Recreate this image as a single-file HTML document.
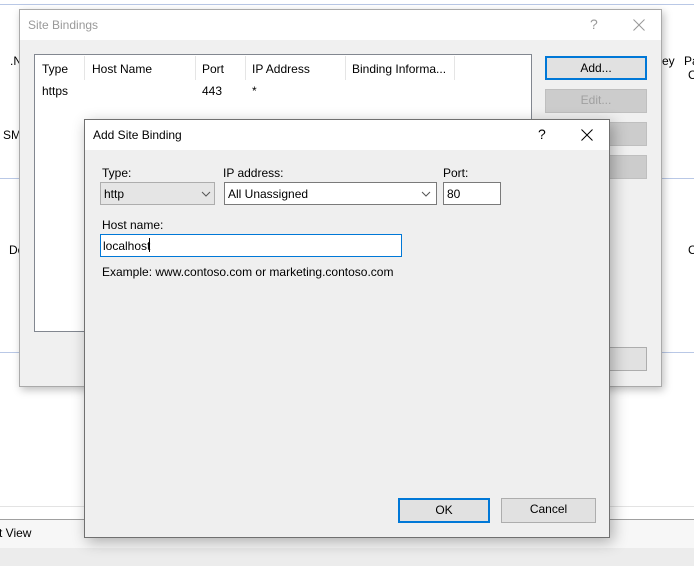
<!DOCTYPE html>
<html><head><style>
*{box-sizing:border-box;margin:0;padding:0}
body{width:694px;height:566px;position:relative;background:#fff;font-family:"Liberation Sans",sans-serif;font-size:12px;color:#000;overflow:hidden}
.a{position:absolute}
.t{position:absolute;white-space:nowrap}
.btn{position:absolute;background:#e1e1e1;border:1px solid #adadad;text-align:center;line-height:21px}
.dis{color:#a0a0a0;background:#cccccc;border-color:#bfbfbf}
</style></head><body>
<div class="a" style="left:0;top:4px;width:694px;height:1px;background:#b9c8e6"></div>
<div class="a" style="left:0;top:178px;width:694px;height:1px;background:#b9c8e6"></div>
<div class="a" style="left:0;top:352px;width:694px;height:1px;background:#b9c8e6"></div>
<div class="t" style="left:10px;top:54px">.N</div>
<div class="t" style="left:3px;top:128px">SM</div>
<div class="t" style="left:9px;top:243px">Do</div>
<div class="t" style="left:662px;top:54px">ey</div>
<div class="t" style="left:684px;top:54px">Pa</div>
<div class="t" style="left:688px;top:68px">C</div>
<div class="t" style="left:688px;top:243px">C</div>
<div class="a" style="left:0;top:506px;width:694px;height:1px;background:#e3e3e3"></div>
<div class="a" style="left:0;top:519px;width:694px;height:1px;background:#a0a0a0"></div>
<div class="a" style="left:0;top:520px;width:694px;height:28px;background:#f7f7f7"></div>
<div class="a" style="left:0;top:548px;width:694px;height:18px;background:#ececec"></div>
<div class="t" style="left:-1px;top:526px">t View</div>

<!-- Site Bindings -->
<div class="a" style="left:19px;top:9px;width:643px;height:378px;background:#f0f0f0;border:1px solid #aaa;box-shadow:2px 3px 8px rgba(0,0,0,.25)">
 <div class="a" style="left:0;top:0;width:641px;height:30px;background:#fff"></div>
 <div class="t" style="left:8px;top:8px;color:#999">Site Bindings</div>
 <div class="t" style="left:570px;top:6px;color:#999;font-size:14px">?</div>
 <svg class="a" style="left:613px;top:9px" width="12" height="12"><path d="M0.5 0.5L11.5 11.5M11.5 0.5L0.5 11.5" stroke="#999" stroke-width="1"/></svg>
 <div class="a" style="left:14px;top:44px;width:498px;height:278px;background:#fff;border:1px solid #828790"></div>
 <div class="t" style="left:22px;top:52px">Type</div>
 <div class="t" style="left:72px;top:52px">Host Name</div>
 <div class="t" style="left:182px;top:52px">Port</div>
 <div class="t" style="left:232px;top:52px">IP Address</div>
 <div class="t" style="left:332px;top:52px">Binding Informa...</div>
 <div class="a" style="left:64px;top:46px;width:1px;height:24px;background:#e5e5e5"></div>
 <div class="a" style="left:175px;top:46px;width:1px;height:24px;background:#e5e5e5"></div>
 <div class="a" style="left:225px;top:46px;width:1px;height:24px;background:#e5e5e5"></div>
 <div class="a" style="left:325px;top:46px;width:1px;height:24px;background:#e5e5e5"></div>
 <div class="a" style="left:434px;top:46px;width:1px;height:24px;background:#e5e5e5"></div>
 <div class="t" style="left:22px;top:74px">https</div>
 <div class="t" style="left:182px;top:74px">443</div>
 <div class="t" style="left:232px;top:74px">*</div>
 <div class="btn" style="left:525px;top:46px;width:102px;height:24px;border:2px solid #0078d7;line-height:20px">Add...</div>
 <div class="btn dis" style="left:525px;top:79px;width:102px;height:24px">Edit...</div>
 <div class="btn dis" style="left:525px;top:112px;width:102px;height:24px"></div>
 <div class="btn dis" style="left:525px;top:145px;width:102px;height:24px"></div>
 <div class="btn" style="left:525px;top:337px;width:102px;height:24px"></div>
</div>

<!-- Add Site Binding -->
<div class="a" style="left:84px;top:119px;width:526px;height:419px;background:#efefef;border:1px solid #707070;box-shadow:3px 4px 14px rgba(0,0,0,.3)">
 <div class="a" style="left:0;top:0;width:524px;height:30px;background:#fff"></div>
 <div class="t" style="left:8px;top:8px">Add Site Binding</div>
 <div class="t" style="left:453px;top:6px;font-size:14px">?</div>
 <svg class="a" style="left:496px;top:9px" width="12" height="12"><path d="M0.5 0.5L11.5 11.5M11.5 0.5L0.5 11.5" stroke="#000" stroke-width="1"/></svg>
 <div class="t" style="left:17px;top:46px">Type:</div>
 <div class="t" style="left:138px;top:46px">IP address:</div>
 <div class="t" style="left:358px;top:46px">Port:</div>
 <div class="a" style="left:15px;top:62px;width:115px;height:23px;background:#e5e5e5;border:1px solid #adadad"></div>
 <div class="t" style="left:19px;top:67px">http</div>
 <svg class="a" style="left:116px;top:71px" width="10" height="6"><path d="M1 1L5 5L9 1" stroke="#555" fill="none"/></svg>
 <div class="a" style="left:139px;top:62px;width:213px;height:23px;background:#fff;border:1px solid #7a7a7a"></div>
 <div class="t" style="left:143px;top:67px">All Unassigned</div>
 <svg class="a" style="left:336px;top:71px" width="10" height="6"><path d="M1 1L5 5L9 1" stroke="#555" fill="none"/></svg>
 <div class="a" style="left:358px;top:62px;width:58px;height:23px;background:#fff;border:1px solid #7a7a7a"></div>
 <div class="t" style="left:362px;top:67px">80</div>
 <div class="t" style="left:17px;top:98px">Host name:</div>
 <div class="a" style="left:15px;top:114px;width:302px;height:23px;background:#fff;border:1px solid #0078d7"></div>
 <div class="t" style="left:18px;top:119px">localhost</div>
 <div class="a" style="left:64px;top:118px;width:1px;height:14px;background:#000"></div>
 <div class="t" style="left:17px;top:145px">Example: www.contoso.com or marketing.contoso.com</div>
 <div class="btn" style="left:313px;top:378px;width:92px;height:25px;border:2px solid #0078d7;line-height:21px">OK</div>
 <div class="btn" style="left:416px;top:378px;width:95px;height:25px">Cancel</div>
</div>
</body></html>
